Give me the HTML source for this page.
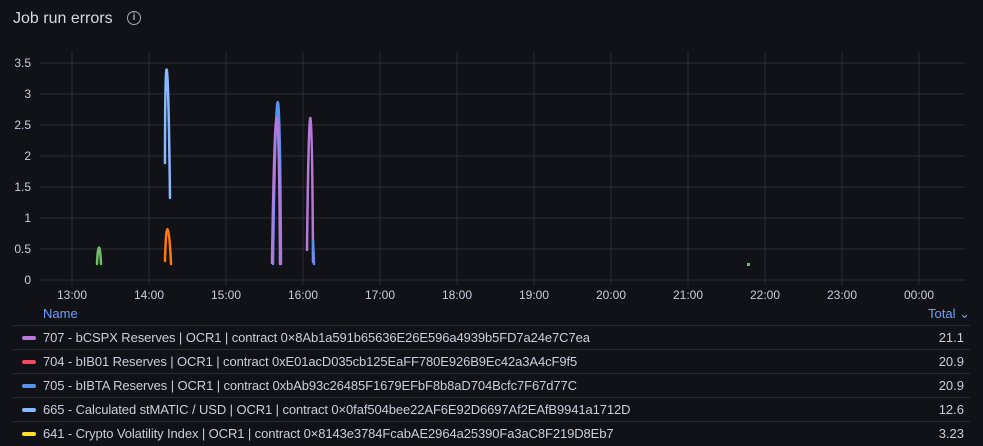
<!DOCTYPE html>
<html><head><style>
body{margin:0;background:#111217;width:983px;height:445px;overflow:hidden;font-family:"Liberation Sans",sans-serif;color:#ccccdc;position:relative}
.t{position:absolute;left:13px;top:10px;font-size:16px;color:#d8d9e0}
.info{position:absolute;left:127px;top:11px;width:12px;height:12px;border:1.5px solid #aaa;border-radius:50%;font-size:10px;text-align:center;line-height:12px;color:#aaa;font-weight:bold}
.lg{position:absolute;left:13px;right:13px;font-size:13px}
.row{position:absolute;left:13px;width:957px;height:24px;border-top:1px solid #2a2b31;font-size:13px;line-height:24px;color:#ccccdc}
.row i{position:absolute;left:9px;top:10px;width:14px;height:4px;border-radius:2px}
.row span{position:absolute;left:30px;letter-spacing:-0.1px}
.row b{position:absolute;right:6px;font-weight:normal}
</style></head><body>
<div class="t">Job run errors</div><div class="info">i</div>
<svg width="983" height="300" style="position:absolute;left:0;top:0" font-family="Liberation Sans" font-size="12" fill="#ccccdc">
<g stroke="#2a2b31" stroke-width="1">
<line x1="40" x2="965" y1="63" y2="63"/><line x1="40" x2="965" y1="94" y2="94"/><line x1="40" x2="965" y1="125" y2="125"/><line x1="40" x2="965" y1="156" y2="156"/><line x1="40" x2="965" y1="187" y2="187"/><line x1="40" x2="965" y1="218" y2="218"/><line x1="40" x2="965" y1="249" y2="249"/><line x1="40" x2="965" y1="280" y2="280"/>
<line x1="72" x2="72" y1="52" y2="285"/><line x1="149" x2="149" y1="52" y2="285"/><line x1="226" x2="226" y1="52" y2="285"/><line x1="303" x2="303" y1="52" y2="285"/><line x1="380" x2="380" y1="52" y2="285"/><line x1="457" x2="457" y1="52" y2="285"/><line x1="534" x2="534" y1="52" y2="285"/><line x1="611" x2="611" y1="52" y2="285"/><line x1="688" x2="688" y1="52" y2="285"/><line x1="765" x2="765" y1="52" y2="285"/><line x1="842" x2="842" y1="52" y2="285"/><line x1="919" x2="919" y1="52" y2="285"/>
</g>
<g text-anchor="end"><text x="31" y="67">3.5</text><text x="31" y="98">3</text><text x="31" y="129">2.5</text><text x="31" y="160">2</text><text x="31" y="191">1.5</text><text x="31" y="222">1</text><text x="31" y="253">0.5</text><text x="31" y="284">0</text></g>
<g text-anchor="middle"><text x="72" y="299">13:00</text><text x="149" y="299">14:00</text><text x="226" y="299">15:00</text><text x="303" y="299">16:00</text><text x="380" y="299">17:00</text><text x="457" y="299">18:00</text><text x="534" y="299">19:00</text><text x="611" y="299">20:00</text><text x="688" y="299">21:00</text><text x="765" y="299">22:00</text><text x="842" y="299">23:00</text><text x="919" y="299">00:00</text></g>
<g fill="none" stroke-width="2.5" stroke-linecap="round">
<path d="M97 264 C98 242 100 242 101 264" stroke="#73bf69"/>
<path d="M165 163 C165 33 168 33 170 198" stroke="#8ab8ff"/>
<path d="M165 261 C166 218 169 218 171 264" stroke="#ff780a"/>
<path d="M273 264 C276 48 280 48 281 264" stroke="#5794f2"/>
<path d="M272 263 C275 69 279 69 280 264" stroke="#b877d9"/>
<path d="M307 250 C309 72 312 72 313 262" stroke="#b877d9"/>
<path d="M313 240 L314 264" stroke="#5794f2"/>
</g>
<rect x="747" y="263" width="3" height="3" fill="#73bf69"/>
</svg>
<div class="lg" style="top:306px;left:43px;color:#6e9fff">Name</div>
<div class="lg" style="top:306px;left:auto;right:13px;color:#6e9fff">Total ⌄</div>
<div class="row" style="top:325px"><i style="background:#b877d9"></i><span>707 - bCSPX Reserves | OCR1 | contract 0×8Ab1a591b65636E26E596a4939b5FD7a24e7C7ea</span><b>21.1</b></div>
<div class="row" style="top:349px"><i style="background:#f2495c"></i><span>704 - bIB01 Reserves | OCR1 | contract 0xE01acD035cb125EaFF780E926B9Ec42a3A4cF9f5</span><b>20.9</b></div>
<div class="row" style="top:373px"><i style="background:#5794f2"></i><span>705 - bIBTA Reserves | OCR1 | contract 0xbAb93c26485F1679EFbF8b8aD704Bcfc7F67d77C</span><b>20.9</b></div>
<div class="row" style="top:397px"><i style="background:#8ab8ff"></i><span>665 - Calculated stMATIC / USD | OCR1 | contract 0×0faf504bee22AF6E92D6697Af2EAfB9941a1712D</span><b>12.6</b></div>
<div class="row" style="top:421px"><i style="background:#fade2a"></i><span>641 - Crypto Volatility Index | OCR1 | contract 0×8143e3784FcabAE2964a25390Fa3aC8F219D8Eb7</span><b>3.23</b></div>
</body></html>
